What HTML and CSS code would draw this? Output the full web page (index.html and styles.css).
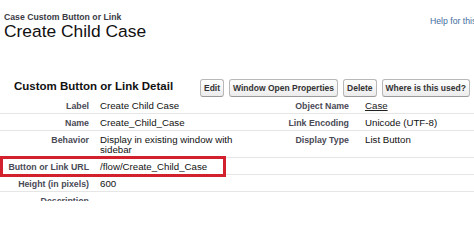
FILE: index.html
```html
<!DOCTYPE html>
<html lang="en">
<head>
<meta charset="utf-8">
<title>Create Child Case</title>
<link rel="stylesheet" href="styles.css">
</head>
<body>
<div class="page">
  <header class="bpage">
    <div class="ptitle">
      <div class="ptype">Case Custom Button or Link</div>
      <h1 class="pdesc">Create Child Case</h1>
    </div>
    <div class="help"><a href="#">Help for this Page</a></div>
  </header>

  <section class="block">
    <div class="block-head">
      <h2 class="block-title">Custom Button or Link Detail</h2>
      <div class="btns">
        <button class="btn">Edit</button>
        <button class="btn">Window Open Properties</button>
        <button class="btn">Delete</button>
        <button class="btn">Where is this used?</button>
      </div>
    </div>

    <div class="detail">
      <div class="row">
        <div class="lbl">Label</div><div class="val">Create Child Case</div>
        <div class="lbl">Object Name</div><div class="val"><a class="lnk" href="#">Case</a></div>
      </div>
      <div class="row">
        <div class="lbl">Name</div><div class="val">Create_Child_Case</div>
        <div class="lbl">Link Encoding</div><div class="val">Unicode (UTF-8)</div>
      </div>
      <div class="row">
        <div class="lbl">Behavior</div><div class="val">Display in existing window with sidebar</div>
        <div class="lbl">Display Type</div><div class="val">List Button</div>
      </div>
      <div class="row row-hl">
        <div class="lbl">Button or Link URL</div><div class="val">/flow/Create_Child_Case</div>
        <div class="lbl"></div><div class="val"></div>
        <div class="hl-box"></div>
      </div>
      <div class="row">
        <div class="lbl">Height (in pixels)</div><div class="val">600</div>
        <div class="lbl"></div><div class="val"></div>
      </div>
      <div class="row">
        <div class="lbl">Description</div><div class="val"></div>
        <div class="lbl"></div><div class="val"></div>
      </div>
    </div>
  </section>
</div>
</body>
</html>
```

FILE: styles.css
```css
html, body {
  margin: 0;
  padding: 0;
  background: #fff;
}
body {
  font-family: "Liberation Sans", Arial, sans-serif;
  color: #000;
  overflow: hidden;
}
.page {
  width: 474px;
  height: 201px;
  overflow: hidden;
}
.bpage {
  display: flex;
  height: 40px;
}
.ptitle {
  flex: 0 0 426px;
  padding-left: 4px;
  padding-top: 12px;
}
.ptype {
  font-size: 8.7px;
  font-weight: bold;
  line-height: 10px;
  color: #3a3a44;
  white-space: nowrap;
}
.pdesc {
  margin: 0;
  font-size: 17.4px;
  font-weight: normal;
  line-height: 18px;
  color: #111;
  white-space: nowrap;
}
.help {
  padding-top: 16px;
  white-space: nowrap;
  font-size: 8.7px;
  line-height: 10px;
}
.help a {
  color: #3f6d9e;
  text-decoration: none;
}
.block {
  margin-top: 39px;
}
.block-head {
  display: flex;
  align-items: flex-start;
}
.block-title {
  margin: 0;
  flex: 0 0 200px;
  padding-left: 14px;
  box-sizing: border-box;
  font-size: 11.5px;
  font-weight: bold;
  line-height: 15px;
  color: #111;
  white-space: nowrap;
}
.btns {
  display: flex;
  gap: 5px;
}
.btn {
  font-family: "Liberation Sans", Arial, sans-serif;
  font-size: 8.5px;
  font-weight: bold;
  line-height: 10px;
  color: #333;
  padding: 3px 3px 3px;
  margin: 0;
  border: 1px solid #b8b8b8;
  border-bottom-color: #9a9a9a;
  border-radius: 3px;
  background: linear-gradient(#ffffff, #ececec);
  white-space: nowrap;
}
.detail {
  margin-top: 0;
}
.row {
  display: grid;
  grid-template-columns: 89px 160px 100px 1fr;
  border-bottom: 1px solid #e6e6e6;
}
.row-hl {
  position: relative;
}
.lbl, .val {
  padding: 4px 0 2px;
  line-height: 10px;
}
.lbl {
  text-align: right;
  font-size: 8.8px;
  font-weight: bold;
  color: #4a4a56;
  white-space: nowrap;
}
.val {
  font-size: 9.7px;
  color: #111;
}
.row > .val:nth-child(2) {
  padding-left: 11px;
}
.row > .val:nth-child(4) {
  padding-left: 16px;
}
.lnk {
  color: #222;
  text-decoration: underline;
}
.hl-box {
  position: absolute;
  left: 0;
  top: -2px;
  width: 226px;
  height: 21px;
  box-sizing: border-box;
  border: 3px solid #d3202d;
}
```
